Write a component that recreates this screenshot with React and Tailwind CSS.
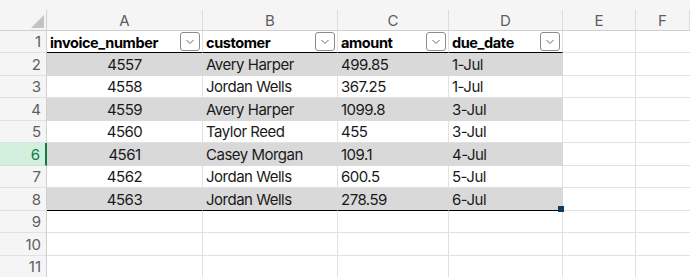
import React from "react";

const cols = ["A", "B", "C", "D", "E", "F"];

const rows = [
  ["4557", "Avery Harper", "499.85", "1-Jul"],
  ["4558", "Jordan Wells", "367.25", "1-Jul"],
  ["4559", "Avery Harper", "1099.8", "3-Jul"],
  ["4560", "Taylor Reed", "455", "3-Jul"],
  ["4561", "Casey Morgan", "109.1", "4-Jul"],
  ["4562", "Jordan Wells", "600.5", "5-Jul"],
  ["4563", "Jordan Wells", "278.59", "6-Jul"],
];

const heads = ["invoice_number", "customer", "amount", "due_date"];

const rowH = ["h-[22px]", "h-[23px]", "h-[22px]", "h-[23px]", "h-[22px]", "h-[23px]", "h-[22px]", "h-[23px]", "h-[22px]", "h-[23px]", "h-[22px]"];

const gridCols = "grid grid-cols-[47px_156px_135px_111px_114px_73px_1fr]";

function FilterBtn() {
  return (
    <span className="absolute right-[2px] top-[1px] w-[20px] h-[19px] rounded-[3px] border border-[#8c8c8c] bg-white flex items-center justify-center">
      <svg width="10" height="6" viewBox="0 0 10 6">
        <path d="M1.5 1 L5 4.5 L8.5 1" fill="none" stroke="#6b6b6b" strokeWidth="1" />
      </svg>
    </span>
  );
}

function RowHead({ n, h, active }) {
  return (
    <div
      className={`${h} flex items-center justify-end pr-[5px] pt-[2px] text-[15px] border-b ${
        active
          ? "bg-[#d3f0df] text-[#107c41] border-r-2 border-r-[#107c41] border-b-[#c6e5d2]"
          : "bg-[#f5f5f5] text-[#5e5e5e] border-r border-r-[#cfcfcf] border-b-[#e1e1e1]"
      }`}
    >
      {n}
    </div>
  );
}

export default function App() {
  return (
    <div className="w-[690px] h-[277px] overflow-hidden bg-white text-[#1a1a1a]" style={{ fontFamily: "Inter, 'Open Sans', sans-serif" }}>
      <div className="h-[10px] bg-[#f5f5f5]" />
      <div className={gridCols}>
        <div className="h-[21px] bg-[#f5f5f5] border-r border-[#cfcfcf] border-b border-b-[#cfcfcf] relative">
          <svg className="absolute right-[2px] bottom-[2px]" width="13" height="13" viewBox="0 0 13 13">
            <path d="M13 0 L13 13 L0 13 Z" fill="#c3c3c3" />
          </svg>
        </div>
        {cols.map((c) => (
          <div key={c} className="h-[21px] bg-[#f5f5f5] border-r border-[#dcdcdc] border-b border-b-[#cfcfcf] flex items-center justify-center pt-[2px] text-[15px] text-[#5e5e5e]">
            {c}
          </div>
        ))}

        <RowHead n={1} h={rowH[0]} />
        {heads.map((t) => (
          <div key={t} className={`${rowH[0]} relative border-r border-r-[#e1e1e1] border-b border-b-black flex items-center pl-[3px] pt-[2px] text-[14.5px] tracking-[-0.4px] font-bold text-black`}>
            {t}
            <FilterBtn />
          </div>
        ))}
        <div className={`${rowH[0]} border-r border-b border-[#e1e1e1]`} />
        <div className={`${rowH[0]} border-b border-[#e1e1e1]`} />

        {rows.map((r, i) => {
          const band = i % 2 === 0;
          const last = i === rows.length - 1;
          const h = rowH[i + 1];
          const cell = `${h} flex items-center pt-[2px] text-[15px] tracking-[-0.5px] border-r border-b ${
            band ? "bg-[#d9d9d9] border-r-[#d9d9d9]" : "bg-white border-r-[#e1e1e1]"
          } ${last ? "border-b-black" : band ? "border-b-[#d9d9d9]" : "border-b-[#e1e1e1]"}`;
          return (
            <React.Fragment key={r[0]}>
              <RowHead n={i + 2} h={h} active={i === 4} />
              <div className={`${cell} justify-center`}>{r[0]}</div>
              <div className={`${cell} pl-[3px]`}>{r[1]}</div>
              <div className={`${cell} pl-[3px]`}>{r[2]}</div>
              <div className={`${cell} pl-[3px] relative`}>
                {r[3]}
                {last && <span className="absolute right-[-2px] bottom-[-2px] w-[6px] h-[6px] bg-[#0f3a5e]" />}
              </div>
              <div className={`${h} border-r border-b border-[#e1e1e1]`} />
              <div className={`${h} border-b border-[#e1e1e1]`} />
            </React.Fragment>
          );
        })}

        {[9, 10, 11].map((n, k) => {
          const h = rowH[8 + k];
          return (
            <React.Fragment key={n}>
              <RowHead n={n} h={h} />
              {[0, 1, 2, 3, 4].map((j) => (
                <div key={j} className={`${h} border-r border-b border-[#e1e1e1]`} />
              ))}
              <div className={`${h} border-b border-[#e1e1e1]`} />
            </React.Fragment>
          );
        })}
      </div>
    </div>
  );
}
